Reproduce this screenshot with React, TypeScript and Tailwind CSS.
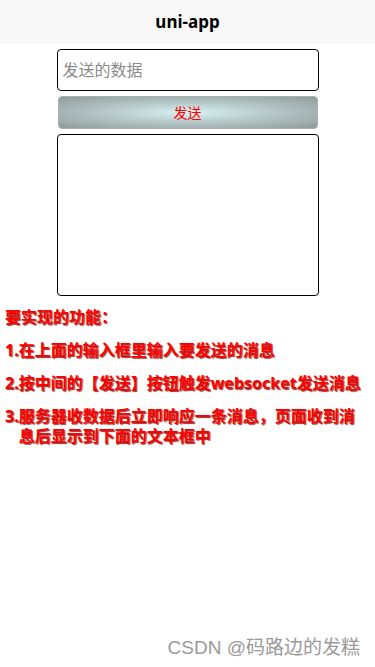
export default function App() {
  const sans = "font-['Noto_Sans','Noto_Sans_CJK_SC',sans-serif]";
  return (
    <div className={`min-h-[667px] bg-white ${sans} relative`}>
      {/* Nav bar */}
      <div className="flex h-[44px] items-center justify-center bg-[#f8f8f8]">
        <span className="text-[17px] font-bold text-black">uni-app</span>
      </div>

      <div className="mx-auto mt-[5px] flex w-[262px] flex-col">
        <input
          className="h-[42px] w-full rounded-[4px] border border-black px-[5px] text-[16px] text-black outline-none placeholder:text-[#8a8a8a]"
          placeholder="发送的数据"
        />
        <button className="mx-auto mt-[5px] flex h-[33px] w-[260px] items-center justify-center rounded-[4px] border border-[#a8b0b0] bg-[radial-gradient(ellipse_at_center,#d8f2f2_0%,#b6c8c8_45%,#8e9a9a_100%)] text-[14px] text-[#ff0000]">
          发送
        </button>
        <div className="mt-[5px] h-[162px] w-full rounded-[4px] border border-black" />
      </div>

      <div className="mt-[11px] px-[5px] text-[16px] font-bold leading-[20px] text-[#ff0000] [text-shadow:1px_1px_1px_#7a4040]">
        <p>要实现的功能：</p>
        <p className="mt-[13px]">1.在上面的输入框里输入要发送的消息</p>
        <p className="mt-[13px]">2.按中间的【发送】按钮触发websocket发送消息</p>
        <div className="mt-[13px] flex">
          <span className="shrink-0">3.</span>
          <p>服务器收数据后立即响应一条消息，页面收到消息后显示到下面的文本框中</p>
        </div>
      </div>

      <div className="absolute bottom-[5px] right-[15px] font-['Liberation_Sans','Noto_Sans_CJK_SC',sans-serif] text-[19px] text-[#9a9a9a]">
        CSDN @码路边的发糕
      </div>
    </div>
  );
}
